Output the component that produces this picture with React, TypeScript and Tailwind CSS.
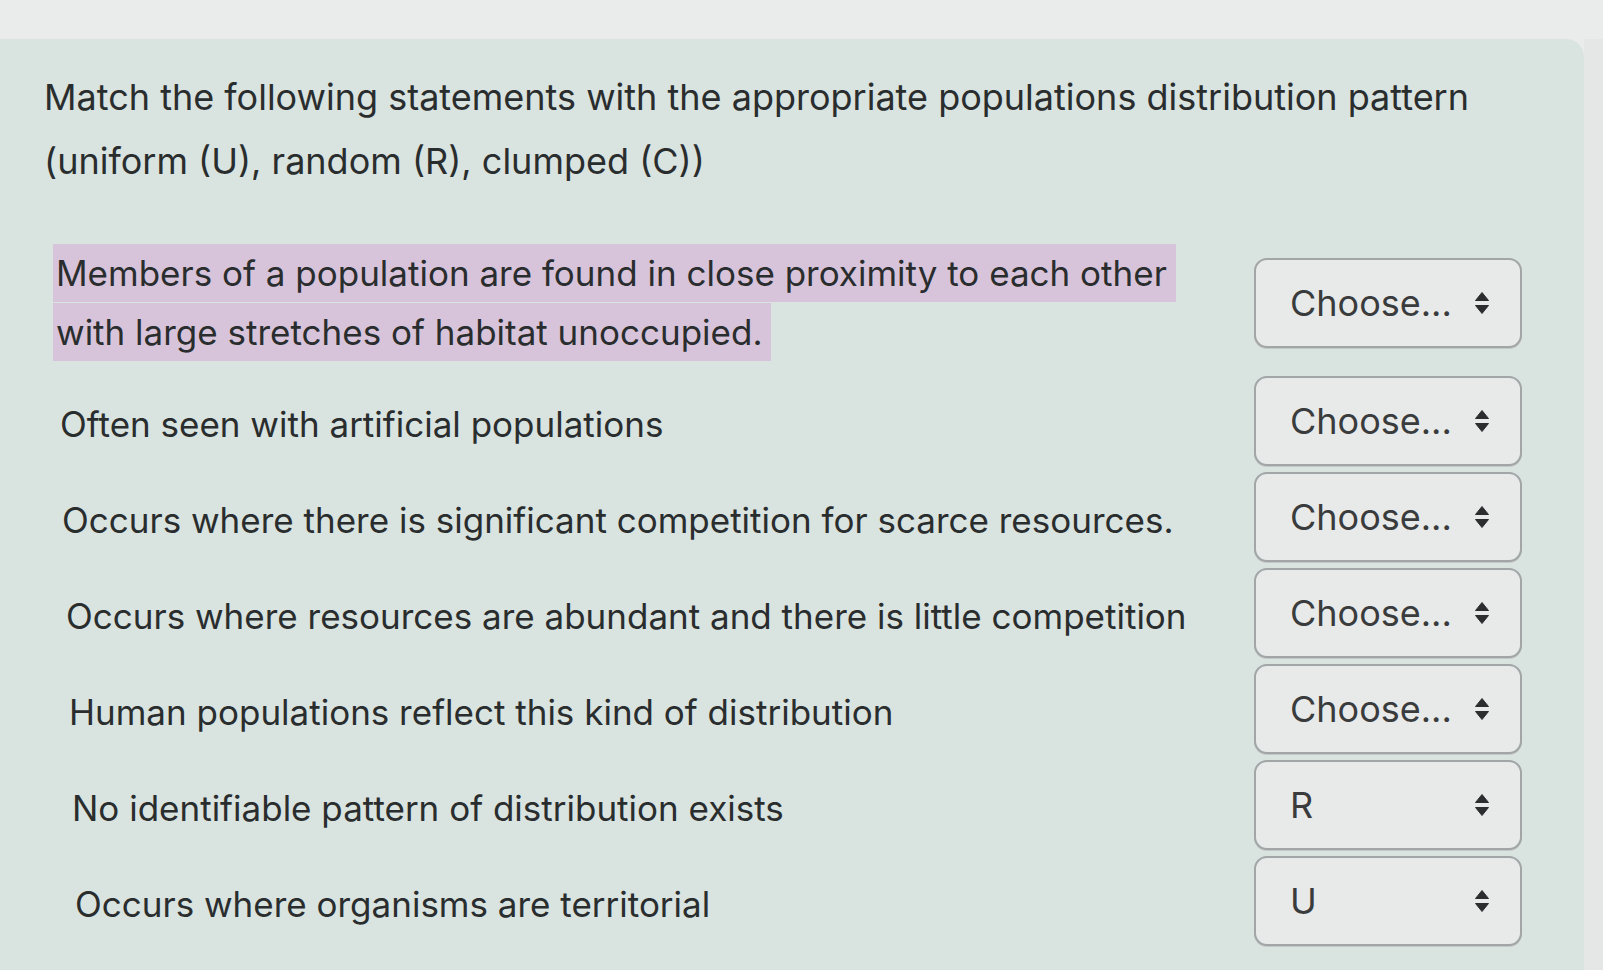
import React from "react";

const font = { fontFamily: "Inter, 'Noto Sans', sans-serif" };

function Arrows() {
  return (
    <svg width="16" height="26" viewBox="0 0 16 26" className="shrink-0">
      <path d="M8 2.5 L14.5 10.5 L1.5 10.5 Z" fill="#2b2d2e" stroke="#2b2d2e" strokeWidth="1" strokeLinejoin="round" />
      <path d="M8 23.5 L14.5 15.5 L1.5 15.5 Z" fill="#2b2d2e" stroke="#2b2d2e" strokeWidth="1" strokeLinejoin="round" />
    </svg>
  );
}

function Select({ value }: { value: string }) {
  return (
    <div className="w-[268px] h-[90px] shrink-0 rounded-[13px] border-2 border-[#a2a6a6] bg-[#e8eae9] shadow-[0_1px_0_#c3c8c7] flex items-center justify-between pl-[34px] pr-[30px]">
      <span className="text-[36px] text-[#393b3c]">{value}</span>
      <Arrows />
    </div>
  );
}

const rows: { text: string; value: string; pl: string }[] = [
  { text: "Often seen with artificial populations", value: "Choose...", pl: "pl-[16px]" },
  { text: "Occurs where there is significant competition for scarce resources.", value: "Choose...", pl: "pl-[18px]" },
  { text: "Occurs where resources are abundant and there is little competition", value: "Choose...", pl: "pl-[22px]" },
  { text: "Human populations reflect this kind of distribution", value: "Choose...", pl: "pl-[25px]" },
  { text: "No identifiable pattern of distribution exists", value: "R", pl: "pl-[28px]" },
  { text: "Occurs where organisms are territorial", value: "U", pl: "pl-[31px]" },
];

export default function App() {
  return (
    <div className="min-h-screen w-full bg-[#e9ecea] pt-[39px]" style={font}>
      <div className="flex">
        <div className="w-[1584px] min-h-[931px] bg-[#d9e3e0] rounded-tr-[18px] pl-[44px] pt-[26px] text-[#2a2d2e]">
          <div className="text-[36px] leading-[64px] whitespace-nowrap">
            Match the following statements with the appropriate populations distribution pattern
            <br />
            (uniform (U), random (R), clumped (C))
          </div>

          <div className="mt-[51px] flex flex-col gap-[6px] w-[1478px]">
            <div className="flex items-center justify-between mb-[8px] pl-[9px]">
              <div className="text-[35px] leading-[59px] whitespace-nowrap">
                <span className="bg-[#d8c4da] py-[8px] pl-[3px] pr-[9px] box-decoration-clone">
                  Members of a population are found in close proximity to each other
                  <br />
                  with large stretches of habitat unoccupied.
                </span>
              </div>
              <Select value="Choose..." />
            </div>
            {rows.map((r) => (
              <div key={r.text} className="flex items-center justify-between">
                <div className={`text-[35px] whitespace-nowrap pt-[6px] ${r.pl}`}>{r.text}</div>
                <Select value={r.value} />
              </div>
            ))}
          </div>
        </div>
        <div className="flex-1 bg-[#e4e7e5]" />
      </div>
    </div>
  );
}
